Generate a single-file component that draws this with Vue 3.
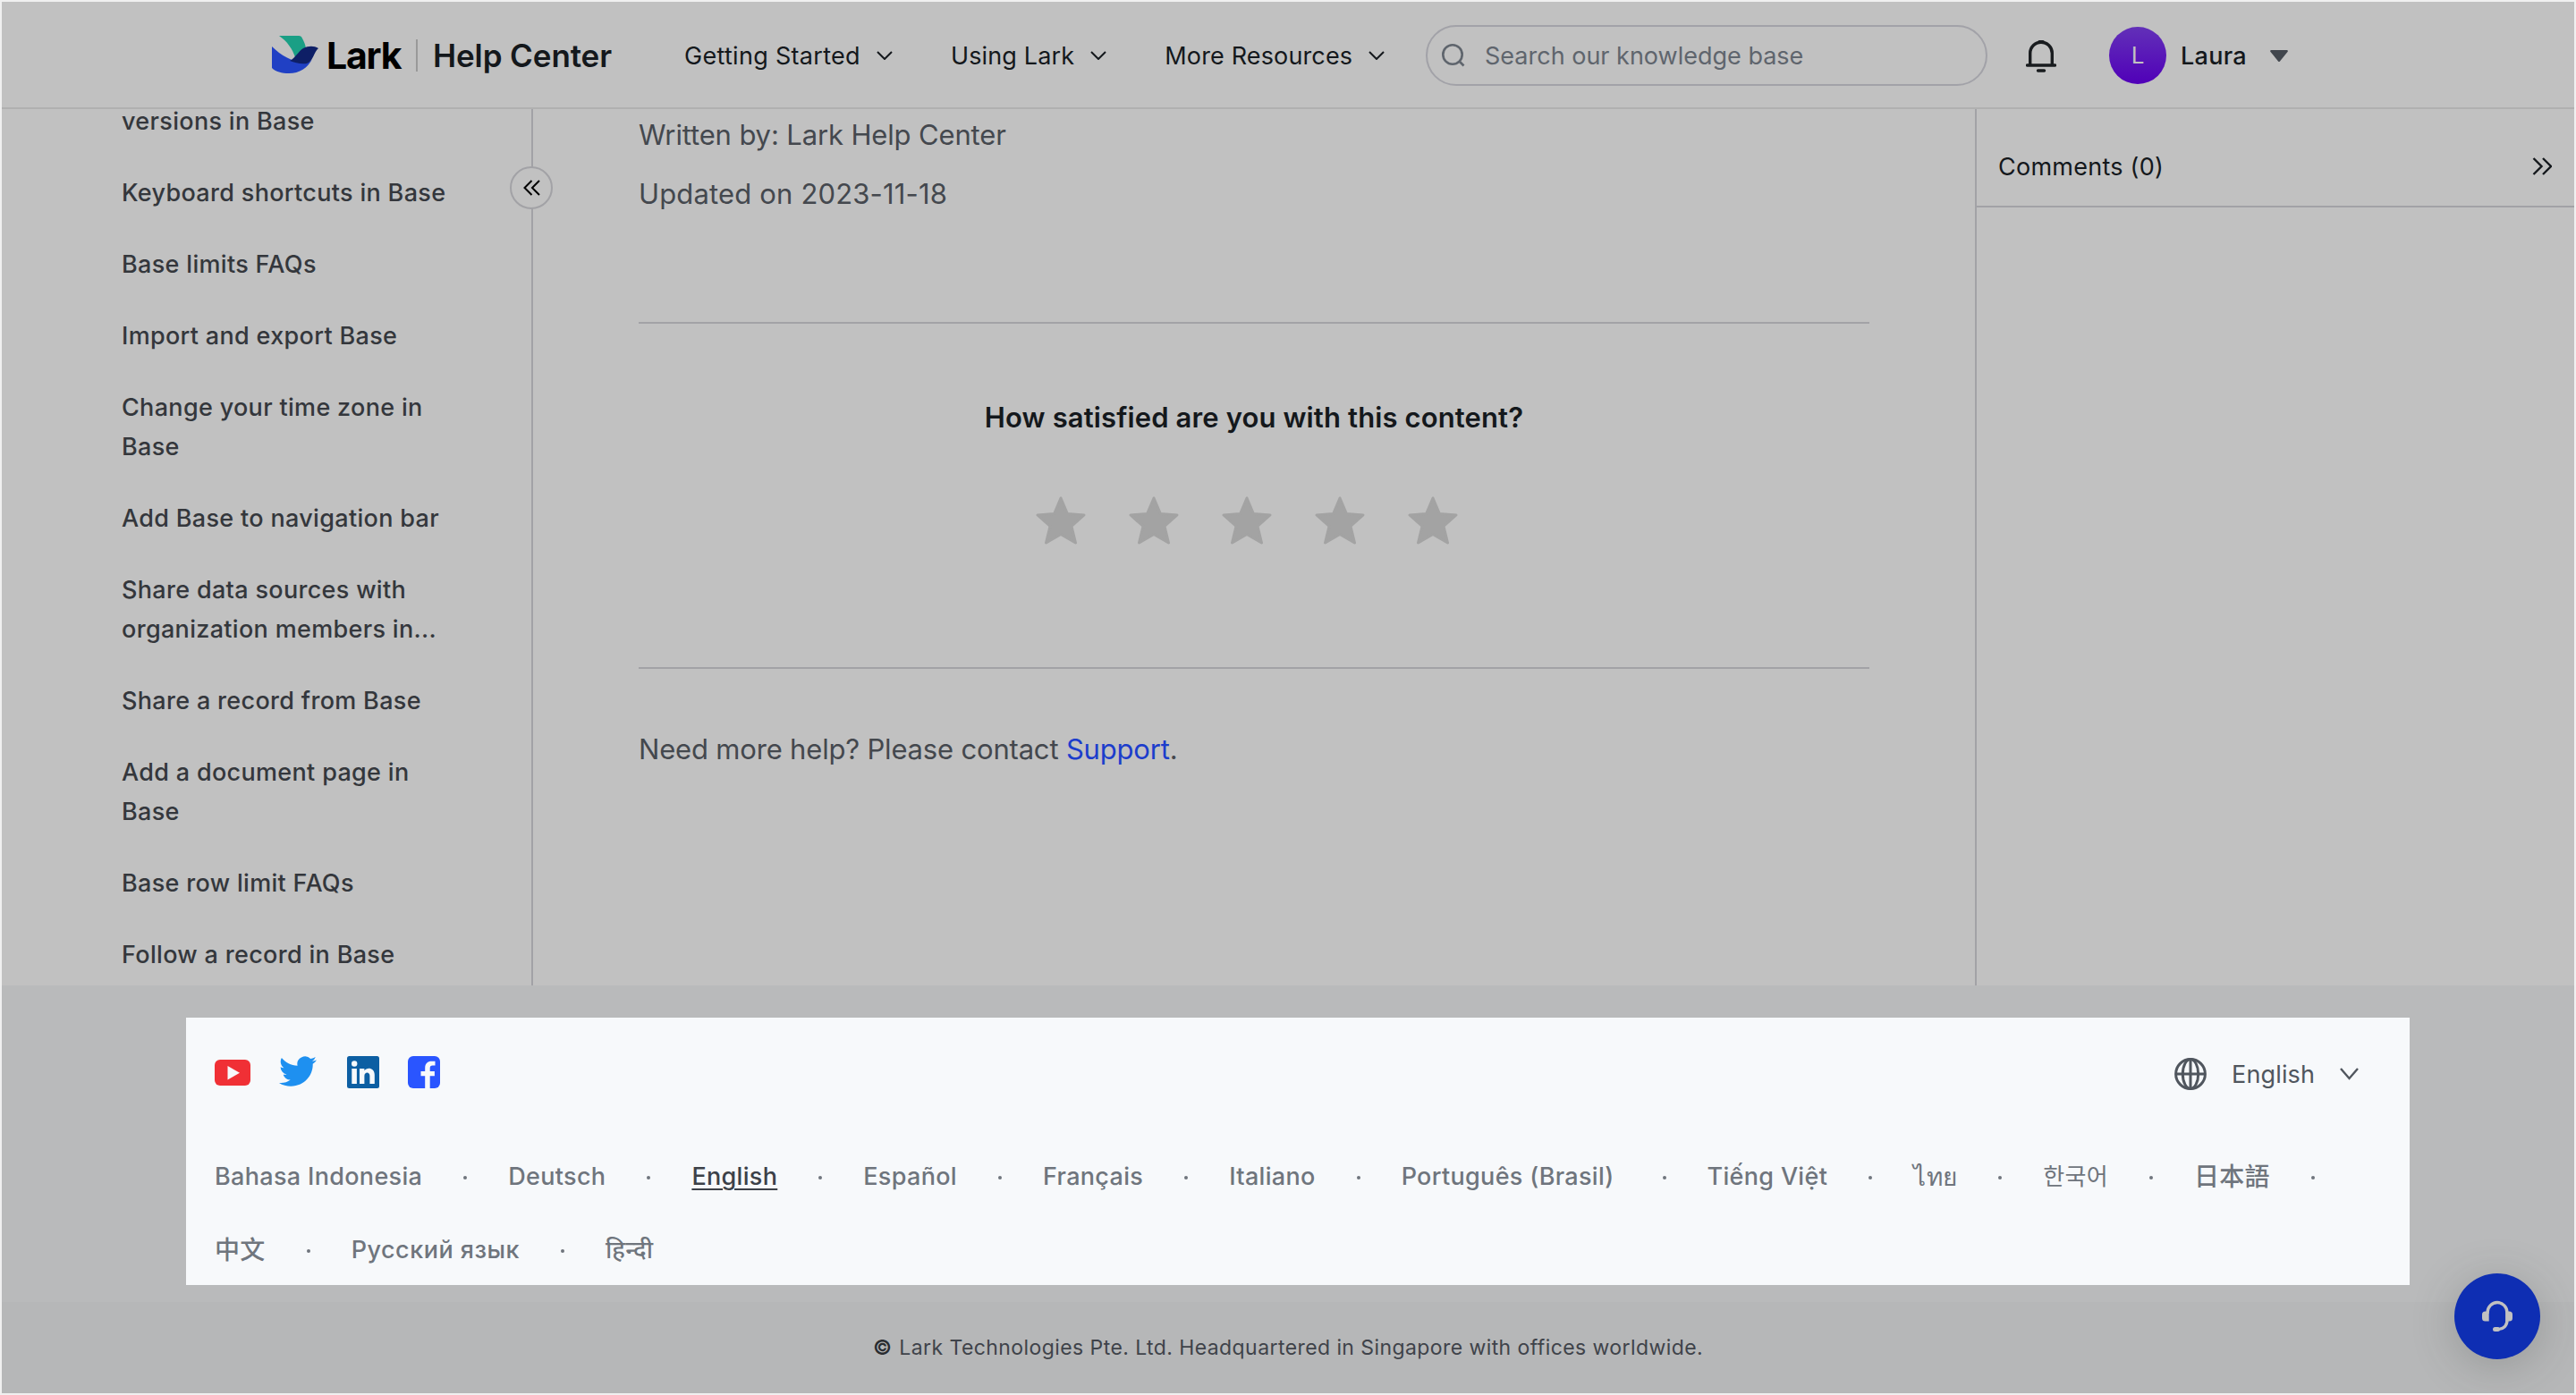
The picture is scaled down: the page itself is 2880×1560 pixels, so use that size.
<template>
  <div class="page">
    <header class="header">
      <a class="brand" href="#">
        <svg class="brand__mark" viewBox="0 0 52 42">
          <path d="M8 0h22q3 0 4 3c2 4 3.500 7 4 11-6 2-9 7-12 10C23 15 17 6 8 0z" fill="#1a9f85" />
          <path d="M0 12c10 10 23 17 37 19 4-1 6-3 8-5C40 36 31 42 19 42 11 42 4 40 0 36z" fill="#2040c4" />
          <path d="M20 28c7-4 9-10 15-14 6-3 12-3 17 0-5 4-6 15-13 17-7 1-13-1-19-3z" fill="#0e1f66" />
        </svg>
        <span class="brand__name">Lark</span>
        <span class="brand__rule"></span>
        <span class="brand__title">Help Center</span>
      </a>

      <nav class="nav">
        <a v-for="item in navItems" :key="item" class="nav__item" href="#">
          <span>{{ item }}</span>
          <svg class="nav__chevron" viewBox="0 0 18 10"><path d="M1 1l8 8 8-8" /></svg>
        </a>
      </nav>

      <div class="search">
        <svg class="search__icon" viewBox="0 0 26 26">
          <circle cx="12" cy="12" r="10.7" />
          <path d="M19.5 19.5l5 5" />
        </svg>
        <span class="search__placeholder">Search our knowledge base</span>
      </div>

      <svg class="bell" viewBox="0 0 34 36">
        <path d="M4.700 28V14.500a12.300 12.300 0 0 1 24.600 0V28" />
        <path d="M1.500 28h31" stroke-linecap="round" />
        <path d="M15 1.800h4M13.500 34h7" stroke-linecap="round" />
      </svg>

      <div class="user">
        <span class="user__avatar">L</span>
        <span class="user__name">Laura</span>
        <svg class="user__caret" viewBox="0 0 20 13"><path d="M1 0h18q1.500.5.5 2l-8.500 10.500q-1 1-2 0L.5 2Q-.5.5 1 0z" /></svg>
      </div>
    </header>

    <div class="body">
      <aside class="sidebar">
        <a v-for="item in articles" :key="item" class="sidebar__item" href="#">{{ item }}</a>
        <button class="sidebar__toggle">
          <svg viewBox="0 0 19 18"><path d="M9.500 1l-8 8 8 8M18 1l-8 8 8 8" /></svg>
        </button>
      </aside>

      <main class="article">
        <p class="article__meta">Written by: Lark Help Center</p>
        <p class="article__meta article__meta--date">Updated on 2023-11-18</p>
        <section class="rating">
          <h2 class="rating__title">How satisfied are you with this content?</h2>
          <div class="rating__stars">
            <svg v-for="n in 5" :key="n" class="rating__star" viewBox="0 0 56 54">
              <path d="M28 2l7.400 17.500L54 21 40 33.500 44.500 52 28 42.500 11.500 52 16 33.500 2 21l18.600-1.500z" />
            </svg>
          </div>
        </section>
        <p class="article__help">Need more help? Please contact <a href="#">Support</a>.</p>
      </main>

      <aside class="comments">
        <div class="comments__head">
          <span class="comments__title">Comments (0)</span>
          <svg class="comments__icon" viewBox="0 0 22 20"><path d="M1.500 1l9 9-9 9M12 1l9 9-9 9" /></svg>
        </div>
      </aside>
    </div>

    <footer class="footer">
      <div class="footer__panel">
        <div class="footer__top">
          <div class="social">
            <svg class="social__youtube" viewBox="0 0 40 29">
              <rect width="40" height="29" rx="6" fill="#f03035" />
              <path d="M14.500 7v15.500L28 14.700z" fill="#f7f9fb" />
            </svg>
            <svg class="social__twitter" viewBox="0 2 24 20.500" preserveAspectRatio="none">
              <path d="M23.953 4.570a10 10 0 01-2.825.775 4.958 4.958 0 002.163-2.723c-.951.555-2.005.959-3.127 1.184a4.920 4.920 0 00-8.384 4.482C7.690 8.095 4.067 6.130 1.640 3.162a4.822 4.822 0 00-.666 2.475c0 1.710.870 3.213 2.188 4.096a4.904 4.904 0 01-2.228-.616v.060a4.923 4.923 0 003.946 4.827 4.996 4.996 0 01-2.212.085 4.936 4.936 0 004.604 3.417 9.867 9.867 0 01-6.102 2.105c-.390 0-.779-.023-1.170-.067a13.995 13.995 0 007.557 2.209c9.053 0 13.998-7.496 13.998-13.985 0-.210 0-.420-.015-.630A9.935 9.935 0 0024 4.590z" fill="#1e90f0" />
            </svg>
            <svg class="social__linkedin" viewBox="0 0 36 36">
              <rect width="36" height="36" rx="2.500" fill="#0d5fa3" />
              <circle cx="8.200" cy="8.500" r="3.200" fill="#f7f9fb" />
              <path d="M5.300 14h5.600v17H5.300zM14 14h5.400v2.300c2.600-4.200 11.400-3.600 11.400 4.700v10h-5.400v-9c0-5-6-4.600-6 0v9H14z" fill="#f7f9fb" />
            </svg>
            <svg class="social__facebook" viewBox="0 0 36 36">
              <rect width="36" height="36" rx="6" fill="#2a55ff" />
              <path d="M19.200 36V22.300h-4.700v-5.400h4.700v-3.500c0-5 3-7.600 7.300-7.600h4v4.800h-2.800c-2.200 0-3 1.200-3 3.100v3.200h5.200v5.400h-5.200V36z" fill="#f7f9fb" />
            </svg>
          </div>
          <div class="locale">
            <svg class="locale__globe" viewBox="0 0 36 36">
              <circle cx="18" cy="18" r="16.400" />
              <ellipse cx="18" cy="18" rx="8.700" ry="16.400" />
              <path d="M18 2v32M2 18h32" />
            </svg>
            <span class="locale__name">English</span>
            <svg class="locale__chevron" viewBox="0 0 21 14"><path d="M1 1l9.500 11L20 1" /></svg>
          </div>
        </div>

        <ul class="languages">
          <li v-for="(lang, i) in languages" :key="lang.code" class="languages__item">
            <a href="#" :class="['languages__link', `languages__link--${lang.code}`]">{{ lang.name }}</a>
            <span v-if="i < languages.length - 1" class="languages__dot"></span>
          </li>
        </ul>
      </div>

      <div class="footer__legal">
        <span class="footer__mark">©</span>
        <span class="footer__text">Lark Technologies Pte. Ltd. Headquartered in Singapore with offices worldwide.</span>
      </div>
    </footer>

    <button class="support">
      <svg class="support__icon" viewBox="0 0 34 36">
        <path class="support__band" d="M6 15V14a11 11.500 0 0 1 22 0v8c0 6.500-4 10.500-11 10.500" />
        <path d="M7.700 12.500v11H3.500Q0 23.500 0 20v-4q0-3.500 3.500-3.500zM26.300 12.500h4.200Q34 12.500 34 16v4q0 3.500-3.500 3.500h-4.200z" />
        <rect x="12" y="30" width="8" height="5" rx="2.500" />
      </svg>
    </button>
  </div>
</template>

<script setup>
const navItems = ['Getting Started', 'Using Lark', 'More Resources']

const articles = [
  'versions in Base',
  'Keyboard shortcuts in Base',
  'Base limits FAQs',
  'Import and export Base',
  'Change your time zone in Base',
  'Add Base to navigation bar',
  'Share data sources with organization members in...',
  'Share a record from Base',
  'Add a document page in Base',
  'Base row limit FAQs',
  'Follow a record in Base'
]

const languages = [
  { code: 'id', name: 'Bahasa Indonesia' },
  { code: 'de', name: 'Deutsch' },
  { code: 'en', name: 'English' },
  { code: 'es', name: 'Español' },
  { code: 'fr', name: 'Français' },
  { code: 'it', name: 'Italiano' },
  { code: 'pt', name: 'Português (Brasil)' },
  { code: 'vi', name: 'Tiếng Việt' },
  { code: 'th', name: 'ไทย' },
  { code: 'ko', name: '한국어' },
  { code: 'ja', name: '日本語' },
  { code: 'zh', name: '中文' },
  { code: 'ru', name: 'Русский язык' },
  { code: 'hi', name: 'हिन्दी' }
]
</script>

<style>
body {
  background: #f4f4f4;
}
</style>

<style scoped>
* {
  box-sizing: border-box;
}

a {
  color: inherit;
  text-decoration: none;
}

svg {
  display: block;
  flex: none;
  fill: none;
}

button {
  padding: 0;
  border: none;
}

.page {
  position: relative;
  display: flex;
  flex-direction: column;
  width: 2880px;
  height: 1560px;
  border: 2px solid #f0f0f0;
  background: #c1c1c1;
  color: #14181c;
  font-family: Inter, "Noto Sans", "Noto Sans CJK SC", sans-serif;
  font-size: 27px;
  overflow: hidden;
}

/* --- Header --- */
.header {
  display: flex;
  align-items: center;
  flex: none;
  height: 120px;
  padding: 2px 0 0 302px;
  border-bottom: 2px solid #b0b0b0;
  white-space: nowrap;
}

.brand {
  display: flex;
  align-items: center;
  width: 461px;
}

.brand__mark {
  width: 52px;
  height: 42px;
  margin-top: -2px;
}

.brand__name {
  width: 100px;
  margin-left: 9px;
  font-size: 41px;
  font-weight: 700;
  letter-spacing: -1.2px;
  color: #000;
}

.brand__rule {
  width: 2px;
  height: 36px;
  background: #999;
}

.brand__title {
  margin-left: 17px;
  font-size: 35px;
  font-weight: 600;
  letter-spacing: -0.1px;
}

.nav {
  display: flex;
  gap: 65px;
  width: 829px;
  letter-spacing: 0.15px;
}

.nav__item {
  display: flex;
  align-items: center;
  gap: 18px;
}

.nav__item:first-child {
  letter-spacing: 0.3px;
}

.nav__chevron {
  width: 18px;
  height: 10px;
  stroke: #14181c;
  stroke-width: 2;
}

.search {
  display: flex;
  align-items: center;
  width: 628px;
  height: 68px;
  padding-left: 16px;
  border: 2px solid #a2a2a8;
  border-radius: 34px;
  color: #5f656d;
}

.search__icon {
  width: 26px;
  height: 26px;
  margin-right: 22px;
  stroke: #5f656d;
  stroke-width: 2.6;
}

.bell {
  width: 34px;
  height: 36px;
  margin-top: 2px;
  margin-left: 43px;
  stroke: #191c1f;
  stroke-width: 3.4;
}

.user {
  display: flex;
  align-items: center;
  margin-left: 59px;
}

.user__avatar {
  width: 64px;
  height: 64px;
  border-radius: 50%;
  background: linear-gradient(#6230b8, #5000b8);
  color: #c1c1c1;
  font-size: 26px;
  line-height: 64px;
  text-align: center;
}

.user__name {
  width: 100px;
  margin-left: 16px;
  font-weight: 500;
  letter-spacing: 0.3px;
}

.user__caret {
  width: 20px;
  height: 13px;
  fill: #41464d;
}

/* --- Columns --- */
.body {
  display: flex;
  flex: none;
  height: 980px;
}

.sidebar {
  position: relative;
  display: flex;
  flex-direction: column;
  gap: 36px;
  width: 594px;
  padding: 0 90px 0 134px;
  border-right: 2px solid #a2a2a6;
  color: #34373c;
  font-weight: 500;
  letter-spacing: 0.32px;
  line-height: 44px;
}

.sidebar__item {
  flex: none;
}

.sidebar__item:first-child {
  margin-top: -8px;
}

.sidebar__toggle {
  position: absolute;
  top: 64px;
  right: -24px;
  display: flex;
  align-items: center;
  justify-content: center;
  width: 48px;
  height: 48px;
  border: 2px solid #a2a2a6;
  border-radius: 50%;
  background: #c1c1c1;
}

.sidebar__toggle svg {
  width: 19px;
  height: 18px;
  stroke: #000;
  stroke-width: 2;
}

.article {
  width: 1612px;
  padding: 0 118px;
  color: #44484e;
  font-size: 31px;
}

.article p {
  margin: 0;
  letter-spacing: -0.14px;
  line-height: 66px;
}

.article p:first-child {
  margin-top: -4px;
}

.article .article__meta--date {
  letter-spacing: 0.16px;
}

.rating {
  display: flex;
  flex-direction: column;
  align-items: center;
  height: 388px;
  margin-top: 110px;
  border-top: 2px solid #a2a2a6;
  border-bottom: 2px solid #a2a2a6;
}

.rating__title {
  margin: 83px 0 0;
  color: #14181c;
  font-size: 31px;
  font-weight: 600;
  letter-spacing: 0.12px;
  line-height: 44px;
}

.rating__stars {
  display: flex;
  gap: 48px;
  margin: 66px 16px 0 0;
}

.rating__star {
  width: 56px;
  height: 54px;
  fill: #a3a3a3;
  stroke: #a3a3a3;
  stroke-width: 3;
  stroke-linejoin: round;
}

.article .article__help {
  margin-top: 57px;
  letter-spacing: -0.18px;
}

.article__help a {
  color: #1c3dcc;
}

.comments {
  flex: 1;
  border-left: 2px solid #a2a2a6;
}

.comments__head {
  display: flex;
  align-items: center;
  justify-content: space-between;
  height: 110px;
  padding: 20px 25px 0 24px;
  border-bottom: 2px solid #a2a2a6;
  letter-spacing: 0.25px;
}

.comments__icon {
  width: 22px;
  height: 20px;
  stroke: #14181c;
  stroke-width: 2.4;
}

/* --- Footer --- */
.footer {
  flex: 1;
  padding-top: 36px;
  background: #b9babb;
}

.footer__panel {
  width: 2486px;
  height: 299px;
  margin-left: 206px;
  padding: 43px 0 0 32px;
  background: #f7f9fb;
  color: #6f757d;
}

.footer__top {
  display: flex;
  justify-content: space-between;
  height: 94px;
  padding-right: 57px;
}

.social {
  display: flex;
  align-items: flex-start;
}

.social__youtube {
  width: 40px;
  height: 29px;
  margin: 4px 32px 0 0;
}

.social__twitter {
  width: 42px;
  height: 35px;
  margin-right: 34px;
}

.social__linkedin,
.social__facebook {
  width: 36px;
  height: 36px;
  margin-right: 32px;
}

.locale {
  display: flex;
  align-items: center;
  height: 40px;
  color: #50565e;
}

.locale__globe {
  width: 36px;
  height: 36px;
  margin-right: 28px;
  stroke: #50565e;
  stroke-width: 3;
}

.locale__name {
  width: 121px;
  letter-spacing: 0.15px;
}

.locale__chevron {
  width: 21px;
  height: 14px;
  stroke: #50565e;
  stroke-width: 2.4;
}

.languages {
  display: flex;
  flex-wrap: wrap;
  margin: 0;
  padding: 0;
  width: 2400px;
  list-style: none;
  font-weight: 500;
  letter-spacing: 0.32px;
  line-height: 82px;
}

.languages__item {
  display: flex;
  align-items: center;
  height: 82px;
}

.languages__dot {
  width: 4px;
  height: 4px;
  margin: 2px 46px 0;
  border-radius: 50%;
  background: #6f757d;
}

.languages__link--en {
  color: #3c4148;
  text-decoration: underline;
  text-decoration-thickness: 2px;
  text-underline-offset: 4px;
}

.languages__link--pt {
  margin-right: 8px;
}

.languages__link--th {
  font-size: 28px;
}

.languages__link--ko {
  font-size: 26px;
  font-weight: 400;
}

.languages__link--ja,
.languages__link--zh {
  font-size: 28px;
}

.languages__link--ru {
  letter-spacing: 0.5px;
}

.footer__legal {
  display: flex;
  align-items: center;
  justify-content: center;
  gap: 8px;
  height: 102px;
  margin-top: 19px;
  background: #b6b7b8;
  color: #3f434a;
  font-size: 23px;
  letter-spacing: 0.42px;
}

.footer__mark {
  color: #2a2d31;
  font-weight: 600;
}

/* --- Floating support button --- */
.support {
  position: absolute;
  right: 38px;
  bottom: 38px;
  display: flex;
  align-items: center;
  justify-content: center;
  width: 96px;
  height: 96px;
  border-radius: 50%;
  background: #0e2eb3;
  box-shadow: 0 8px 48px rgba(60, 64, 60, 0.25);
}

.support__icon {
  width: 34px;
  height: 36px;
  fill: #c1c1c1;
}

.support__band {
  fill: none;
  stroke: #c1c1c1;
  stroke-width: 3.4;
}
</style>
